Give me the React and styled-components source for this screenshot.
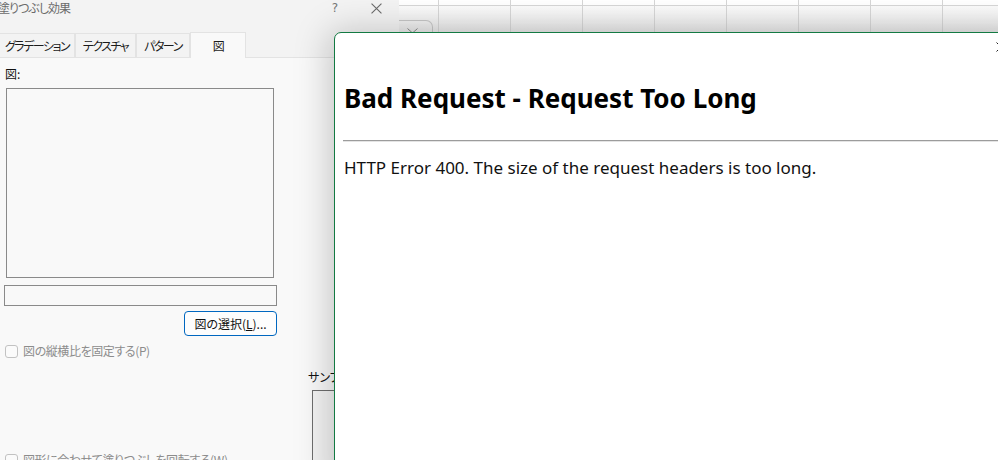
import React from 'react';
import styled, { createGlobalStyle } from 'styled-components';

const GlobalStyle = createGlobalStyle`
  html, body {
    margin: 0;
    padding: 0;
    background: #ffffff;
    overflow: hidden;
  }
`;

const uiFont = `'Noto Sans CJK JP', 'Noto Sans', sans-serif`;

const Screen = styled.div`
  position: relative;
  display: flex;
  width: 998px;
  height: 460px;
  overflow: hidden;
  font-family: ${uiFont};
  font-feature-settings: 'palt';
`;

/* ---------- fill effects dialog ---------- */

const Dialog = styled.div`
  display: flex;
  flex-direction: column;
  width: 399px;
  flex-shrink: 0;
  background: #f3f3f3;
`;

const TitleBar = styled.div`
  display: flex;
  align-items: flex-start;
  justify-content: space-between;
  height: 32px;
  flex-shrink: 0;
`;

const Title = styled.div`
  margin-left: -2px;
  font-size: 12px;
  line-height: 16px;
  letter-spacing: -1px;
  color: #6b6b6b;
`;

const TitleButtons = styled.div`
  display: flex;
  align-items: center;
  gap: 33px;
  padding: 1px 17px 0 0;
`;

const HelpMark = styled.span`
  font-family: 'DejaVu Sans', sans-serif;
  font-size: 12px;
  line-height: 14px;
  color: #777;
`;

const TabStrip = styled.div`
  display: flex;
  align-items: flex-end;
  height: 25px;
  flex-shrink: 0;
  border-bottom: 1px solid #e3e3e3;
`;

const Tab = styled.div`
  display: flex;
  align-items: center;
  justify-content: center;
  box-sizing: border-box;
  flex-shrink: 0;
  width: ${(p) => p.$w}px;
  height: ${(p) => (p.$active ? 26 : 24)}px;
  margin-bottom: ${(p) => (p.$active ? -1 : 0)}px;
  border: 1px solid #e3e3e3;
  border-bottom: none;
  border-left: ${(p) => (p.$first ? 'none' : '1px solid #e3e3e3')};
  background: ${(p) => (p.$active ? '#f9f9f9' : '#f3f3f3')};
  font-size: 12px;
  letter-spacing: -1.5px;
  color: #1b1b1b;
  white-space: nowrap;
`;

const Body = styled.div`
  flex: 1;
  display: flex;
  min-height: 0;
  background: #f9f9f9;
`;

const LeftCol = styled.div`
  display: flex;
  flex-direction: column;
  width: 296px;
  padding: 8px 0 0 4px;
  flex-shrink: 0;
`;

const FieldLabel = styled.div`
  margin-left: 1px;
  font-size: 12px;
  line-height: 16px;
  color: #111;
`;

const PictureBox = styled.div`
  box-sizing: border-box;
  flex-shrink: 0;
  width: 268px;
  height: 190px;
  margin: 6px 0 0 2px;
  border: 1px solid #8a8a8a;
  background: #f9f9f9;
`;

const PathInput = styled.div`
  box-sizing: border-box;
  flex-shrink: 0;
  width: 273px;
  height: 21px;
  margin-top: 7px;
  border: 1px solid #8a8a8a;
  background: #f9f9f9;
`;

const ButtonRow = styled.div`
  display: flex;
  justify-content: flex-end;
  flex-shrink: 0;
  width: 273px;
  margin-top: 5px;
`;

const SelectButton = styled.button`
  box-sizing: border-box;
  width: 93px;
  height: 25px;
  padding: 0;
  border: 1px solid #0067c0;
  border-radius: 4px;
  background: #fdfdfd;
  font-family: ${uiFont};
  font-feature-settings: 'palt';
  font-size: 12px;
  color: #111;
`;

const CheckRow = styled.label`
  display: flex;
  align-items: center;
  flex-shrink: 0;
  gap: 5px;
  margin-top: ${(p) => p.$gap}px;
  margin-left: 1px;
  font-size: 12px;
  line-height: 16px;
  letter-spacing: -0.4px;
  color: #8c8c8c;
  white-space: nowrap;
`;

const CheckBox = styled.span`
  box-sizing: border-box;
  width: 13px;
  height: 13px;
  border: 1px solid #c2c2c2;
  border-radius: 3px;
  background: #fbfbfb;
`;

const RightCol = styled.div`
  display: flex;
  flex-direction: column;
  padding-top: 311px;
`;

const SampleLabel = styled.div`
  margin-left: 8px;
  font-size: 12px;
  line-height: 16px;
  color: #111;
  white-space: nowrap;
`;

const SampleBox = styled.div`
  box-sizing: border-box;
  flex-shrink: 0;
  width: 80px;
  height: 100px;
  margin: 5px 0 0 12px;
  border: 1px solid #6e6e6e;
  background: #f4f4f4;
`;

/* ---------- spreadsheet behind ---------- */

const Sheet = styled.div`
  flex: 1;
  display: flex;
  flex-direction: column;
  background: #fff;
`;

const SheetRow = styled.div`
  display: flex;
  flex-shrink: 0;
  height: ${(p) => p.$h}px;
  border-bottom: ${(p) => (p.$line ? '1px solid #d6d6d6' : 'none')};
  background: ${(p) => (p.$header ? 'linear-gradient(#fbfbfb, #e7e7e7 28px, #e2e2e2)' : '#fff')};
`;

const SheetCell = styled.div`
  box-sizing: border-box;
  flex-shrink: 0;
  width: ${(p) => (p.$corner ? 39 : 72)}px;
  border-left: ${(p) => (p.$corner ? 'none' : '1px solid #d6d6d6')};
  padding-top: ${(p) => (p.$corner ? 14 : 0)}px;
`;

const NameBox = styled.div`
  box-sizing: border-box;
  display: flex;
  justify-content: center;
  width: 34px;
  height: 40px;
  padding: 7px 6px 0 0;
  border: 1px solid #c6c6c6;
  border-left: none;
  border-radius: 0 7px 0 0;
  color: #888;
`;

/* ---------- error page window ---------- */

const ErrorWindow = styled.div`
  position: absolute;
  left: 334px;
  top: 32px;
  width: 700px;
  height: 460px;
  box-sizing: border-box;
  display: flex;
  flex-direction: column;
  padding-left: 9px;
  background: #fff;
  border: 1.5px solid #137a43;
  border-top-left-radius: 7px;
  box-shadow: -4px 0 36px rgba(0, 0, 0, 0.22);
  font-family: 'Noto Sans', 'DejaVu Sans', sans-serif;
  font-feature-settings: normal;
  color: #000;
`;

const WindowBar = styled.div`
  display: flex;
  align-items: flex-start;
  height: 20px;
  padding: 9px 0 0 652px;
  box-sizing: border-box;
`;

const Heading = styled.h2`
  margin: 29px 0 0;
  font-size: 26px;
  line-height: 32px;
  font-weight: 700;
  white-space: nowrap;
`;

const Rule = styled.hr`
  margin: 26px 0 0 -1px;
  height: 0;
  border: none;
  border-top: 1px solid #9c9c9c;
  border-bottom: 1px solid #e4e4e4;
`;

const Message = styled.p`
  margin: 16px 0 0;
  font-size: 17px;
  line-height: 20px;
  color: #111;
  white-space: nowrap;
`;

const Cross = ({ size = 10, color = '#666' }) => (
  <svg width={size} height={size} viewBox="0 0 10 10">
    <path d="M0.5 0.5 L9.5 9.5 M9.5 0.5 L0.5 9.5" stroke={color} strokeWidth="1" fill="none" />
  </svg>
);

const Chevron = () => (
  <svg width="11" height="6" viewBox="0 0 11 6">
    <path d="M0.5 0.5 L5.5 5 L10.5 0.5" stroke="#8a8a8a" strokeWidth="1" fill="none" />
  </svg>
);

const tabs = [
  { label: 'グラデーション', w: 75 },
  { label: 'テクスチャ', w: 61 },
  { label: 'パターン', w: 54 },
  { label: '図', w: 56, active: true },
];

const columns = Array.from({ length: 8 });

export default function App() {
  return (
    <Screen>
      <GlobalStyle />
      <Dialog>
        <TitleBar>
          <Title>塗りつぶし効果</Title>
          <TitleButtons>
            <HelpMark>?</HelpMark>
            <Cross size={11} color="#6a6a6a" />
          </TitleButtons>
        </TitleBar>
        <TabStrip>
          {tabs.map((t, i) => (
            <Tab key={t.label} $w={t.w} $active={t.active} $first={i === 0}>
              {t.label}
            </Tab>
          ))}
        </TabStrip>
        <Body>
          <LeftCol>
            <FieldLabel>図:</FieldLabel>
            <PictureBox />
            <PathInput />
            <ButtonRow>
              <SelectButton>
                図の選択(<u>L</u>)...
              </SelectButton>
            </ButtonRow>
            <CheckRow $gap={7}>
              <CheckBox />
              図の縦横比を固定する(P)
            </CheckRow>
            <CheckRow $gap={93}>
              <CheckBox />
              図形に合わせて塗りつぶしを回転する(W)
            </CheckRow>
          </LeftCol>
          <RightCol>
            <SampleLabel>サンプル:</SampleLabel>
            <SampleBox />
          </RightCol>
        </Body>
      </Dialog>

      <Sheet>
        <SheetRow $h={5} $line>
          <SheetCell $corner />
          {columns.map((_, i) => (
            <SheetCell key={i} />
          ))}
        </SheetRow>
        <SheetRow $h={60} $header>
          <SheetCell $corner>
            <NameBox>
              <Chevron />
            </NameBox>
          </SheetCell>
          {columns.map((_, i) => (
            <SheetCell key={i} />
          ))}
        </SheetRow>
      </Sheet>

      <ErrorWindow>
        <WindowBar>
          <Cross size={10} color="#222" />
        </WindowBar>
        <Heading>Bad Request - Request Too Long</Heading>
        <Rule />
        <Message>HTTP Error 400. The size of the request headers is too long.</Message>
      </ErrorWindow>
    </Screen>
  );
}
